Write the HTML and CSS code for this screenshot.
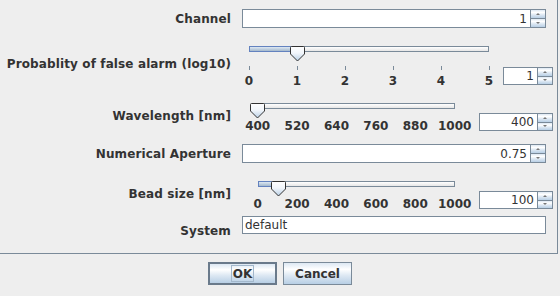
FILE: index.html
```html
<!DOCTYPE html>
<html lang="en">
<head>
    <meta charset="UTF-8">
    <title>Bead Settings</title>
    <link rel="stylesheet" href="styles.css">
</head>
<body>
    <div class="form-panel">
        <label class="field-label">Channel</label>
        <div class="control">
            <div class="spinner spinner-wide top-4">
                <input type="text" value="1">
                <div class="spin-buttons"><span class="up"></span><span class="down"></span></div>
            </div>
        </div>

        <label class="field-label">Probablity of false alarm (log10)</label>
        <div class="control">
            <div class="slider slider-prob top-9">
                <div class="rail">
                    <div class="track track-prob"><div class="fill" style="width: 49px"></div></div>
                    <svg class="thumb" style="left: 48px" width="15" height="16" viewBox="0 0 15 16">
                        <use href="#thumb-shape"/>
                    </svg>
                </div>
                <div class="ticks"></div>
                <div class="scale scale-prob">
                    <span>0</span><span>1</span><span>2</span><span>3</span><span>4</span><span>5</span>
                </div>
            </div>
            <div class="spinner spinner-small top-35">
                <input type="text" value="1">
                <div class="spin-buttons"><span class="up"></span><span class="down"></span></div>
            </div>
        </div>

        <label class="field-label">Wavelength [nm]</label>
        <div class="control">
            <div class="slider slider-nm top-3">
                <div class="rail">
                    <div class="track track-nm"></div>
                    <svg class="thumb" style="left: 8px" width="15" height="16" viewBox="0 0 15 16">
                        <use href="#thumb-shape"/>
                    </svg>
                </div>
                <div class="scale scale-nm">
                    <span>400</span><span>520</span><span>640</span><span>760</span><span>880</span><span>1000</span>
                </div>
            </div>
            <div class="spinner spinner-mid top-18">
                <input type="text" value="400">
                <div class="spin-buttons"><span class="up"></span><span class="down"></span></div>
            </div>
        </div>

        <label class="field-label">Numerical Aperture</label>
        <div class="control">
            <div class="spinner spinner-wide top-7">
                <input type="text" value="0.75">
                <div class="spin-buttons"><span class="up"></span><span class="down"></span></div>
            </div>
        </div>

        <label class="field-label label-low">Bead size [nm]</label>
        <div class="control">
            <div class="slider slider-nm top-6">
                <div class="rail">
                    <div class="track track-nm"><div class="fill" style="width: 21px"></div></div>
                    <svg class="thumb" style="left: 29px" width="15" height="16" viewBox="0 0 15 16">
                        <use href="#thumb-shape"/>
                    </svg>
                </div>
                <div class="scale scale-nm">
                    <span>0</span><span>200</span><span>400</span><span>600</span><span>800</span><span>1000</span>
                </div>
            </div>
            <div class="spinner spinner-mid top-21">
                <input type="text" value="100">
                <div class="spin-buttons"><span class="up"></span><span class="down"></span></div>
            </div>
        </div>

        <label class="field-label">System</label>
        <div class="control">
            <input class="text-field top-6" type="text" value="default">
        </div>
    </div>

    <div class="actions">
        <button type="button" class="default-button"><span class="focus">OK</span></button>
        <button type="button">Cancel</button>
    </div>

    <svg class="defs" width="0" height="0">
        <defs>
            <linearGradient id="thumb-fill" x1="0" y1="0" x2="0" y2="1">
                <stop offset="0" stop-color="#ffffff"/>
                <stop offset="0.45" stop-color="#f2f6fb"/>
                <stop offset="1" stop-color="#b8cfe5"/>
            </linearGradient>
            <path id="thumb-shape" d="M1.5,0.5 H13.5 Q14.5,0.5 14.5,1.5 V8 L7.5,15 L0.5,8 V1.5 Q0.5,0.5 1.5,0.5 Z"
                  fill="url(#thumb-fill)" stroke="#333333" stroke-width="1"/>
        </defs>
    </svg>
</body>
</html>
```

FILE: styles.css
```css
body {
    margin: 0;
    width: 560px;
    height: 296px;
    overflow: hidden;
    background-color: #eeeeee;
    font-family: "DejaVu Sans", Verdana, sans-serif;
    font-size: 12px;
    color: #333333;
}
.form-panel {
    width: 558px;
    box-sizing: border-box;
    padding: 5px 0 7px 0;
    border-right: 1px solid #7a8a99;
    border-bottom: 1px solid #7a8a99;
    display: grid;
    grid-template-columns: 231px 311px;
    grid-template-rows: 27px 63px 42px 33px 46px 30px;
    column-gap: 11px;
}
.field-label {
    font-weight: bold;
    text-align: right;
    white-space: nowrap;
    align-self: center;
    line-height: 14px;
    letter-spacing: 0.12px;
}
.label-low {
    margin-top: 2px;
}
.control {
    display: flex;
    align-items: flex-start;
}
.top-3 { margin-top: 3px; }
.top-4 { margin-top: 4px; }
.top-6 { margin-top: 6px; }
.top-7 { margin-top: 7px; }
.top-9 { margin-top: 9px; }
.top-18 { margin-top: 18px; }
.top-21 { margin-top: 21px; }
.top-35 { margin-top: 35px; }

input[type="text"] {
    box-sizing: border-box;
    margin: 0;
    border: 1px solid #7a8a99;
    border-radius: 0;
    background-color: #fff;
    font-family: "DejaVu Sans", Verdana, sans-serif;
    font-size: 12px;
    color: #333333;
    outline: none;
}
.text-field {
    width: 304px;
    height: 18px;
    padding: 0 2px;
}
.spinner {
    display: flex;
    height: 18px;
}
.spinner-wide {
    width: 304px;
    height: 19px;
}
.spinner-small {
    width: 50px;
}
.spinner-mid {
    width: 74px;
}
.spinner input {
    flex: 1;
    min-width: 0;
    height: 100%;
    padding: 0 3px 0 0;
    border-right: none;
    text-align: right;
}
.spin-buttons {
    width: 16px;
    display: flex;
    flex-direction: column;
}
.spin-buttons span {
    flex: 1;
    box-sizing: border-box;
    display: flex;
    align-items: center;
    justify-content: center;
    border: 1px solid #7a8a99;
    background: linear-gradient(#dde8f3, #ffffff 30%, #dde8f3 60%, #b8cfe5);
}
.spin-buttons span + span {
    border-top: none;
}
.spin-buttons .up::before {
    content: "";
    border-left: 2px solid transparent;
    border-right: 2px solid transparent;
    border-bottom: 2px solid #777;
}
.spin-buttons .down::before {
    content: "";
    border-left: 2px solid transparent;
    border-right: 2px solid transparent;
    border-top: 2px solid #777;
}

.slider {
    flex: none;
}
.slider-prob {
    width: 261px;
}
.slider-nm {
    width: 237px;
}
.rail {
    position: relative;
    height: 16px;
}
.track {
    position: relative;
    box-sizing: border-box;
    margin-top: 5px;
    height: 6px;
    border: 1px solid #7a8a99;
    background: linear-gradient(#ffffff, #e6e6e6);
}
.track-prob {
    margin-left: 7px;
    width: 240px;
}
.track-nm {
    margin-left: 16px;
    width: 197px;
}
.fill {
    position: absolute;
    top: -1px;
    left: -1px;
    height: 6px;
    box-sizing: border-box;
    border: 1px solid #6382bf;
    background: linear-gradient(#dde8f3, #a3b8cc);
}
.thumb {
    position: absolute;
    top: 0;
}
.ticks {
    width: 241px;
    height: 4px;
    margin: 4px 0 4px 7px;
    background: repeating-linear-gradient(to right, #7a8a99 0 1px, transparent 1px 48px);
}
.scale {
    display: grid;
    font-weight: bold;
    line-height: 14px;
    text-align: center;
    white-space: nowrap;
}
.scale-prob {
    grid-template-columns: repeat(6, 48px);
    margin-left: -17px;
}
.scale-nm {
    grid-template-columns: repeat(6, 39.4px);
    margin-left: -4px;
}

.actions {
    display: flex;
    justify-content: center;
    gap: 6px;
    margin-top: 8px;
}
button {
    width: 69px;
    height: 23px;
    padding: 0;
    border: 1px solid #7a8a99;
    border-radius: 0;
    background: linear-gradient(#dde8f3, #ffffff 30%, #dde8f3 60%, #b8cfe5);
    font-family: "DejaVu Sans", Verdana, sans-serif;
    font-size: 12px;
    font-weight: bold;
    color: #333333;
}
.default-button {
    border: 2px solid #6a7a8b;
}
.focus {
    padding: 1px 1px 0 1px;
    outline: 1px solid #a3b8cc;
}
.defs {
    position: absolute;
}
```
